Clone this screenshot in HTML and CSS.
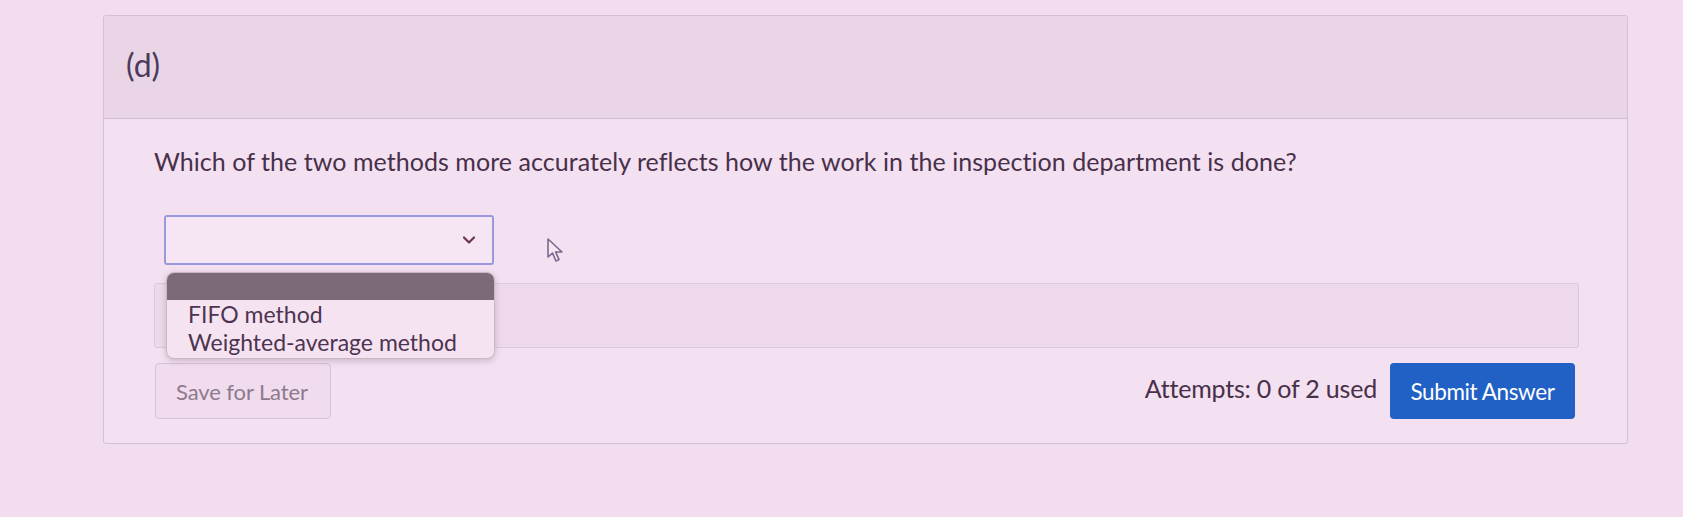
FILE: index.html
```html
<!DOCTYPE html>
<html lang="en">
<head>
<meta charset="utf-8">
<title>Question (d)</title>
<link rel="stylesheet" href="styles.css">
</head>
<body>
<div class="page">
  <section class="card">
    <header class="card-header">(d)</header>
    <div class="card-body">
      <p class="question">Which of the two methods more accurately reflects how the work in the inspection department is done?</p>
      <div class="select-wrap">
        <div class="select">
          <svg class="chev" width="14" height="10" viewBox="0 0 14 10"><path d="M2 2.5 L7 7.5 L12 2.5" fill="none" stroke="#6a3552" stroke-width="2.2" stroke-linecap="round" stroke-linejoin="round"/></svg>
        </div>
        <div class="menu">
          <div class="menu-blank"></div>
          <div class="menu-item">FIFO method</div>
          <div class="menu-item">Weighted-average method</div>
        </div>
        <svg class="cursor" width="22" height="28" viewBox="0 0 22 28"><path d="M2 2 L2 20 L6.5 16 L10 24 L13 22.6 L9.6 15 L16 15 Z" fill="#f6e6f3" stroke="#7a6890" stroke-width="1.6" stroke-linejoin="round"/></svg>
      </div>
      <div class="feedback"></div>
      <div class="actions">
        <button class="btn-save">Save for Later</button>
        <div class="submit-group">
          <span class="attempts">Attempts: 0 of 2 used</span>
          <button class="btn-submit">Submit Answer</button>
        </div>
      </div>
    </div>
  </section>
</div>
</body>
</html>
```

FILE: styles.css
```css
html, body {
  margin: 0;
  padding: 0;
}
body {
  background: #f1ddee;
  font-family: Lato, "Open Sans", "Liberation Sans", sans-serif;
  color: #47304a;
  width: 1683px;
  height: 517px;
  overflow: hidden;
}
.page {
  padding: 15px 55px 0 103px;
}
.card {
  border: 1px solid #d5c0d2;
  border-radius: 3px;
  background: #f3e0f0;
}
.card-header {
  box-sizing: border-box;
  height: 103px;
  background: #e9d5e5;
  border-bottom: 1px solid #d3bdd0;
  padding-left: 22px;
  padding-bottom: 6px;
  display: flex;
  align-items: center;
  font-size: 32px;
  color: #4b3a5c;
}
.card-body {
  padding: 27px 48px 24px 50px;
}
.question {
  margin: 0;
  font-size: 25px;
  line-height: 30px;
  color: #47304a;
  letter-spacing: 0.05px;
}
.select-wrap {
  position: relative;
  margin-top: 39px;
  margin-left: 10px;
  width: 330px;
}
.select {
  height: 50px;
  box-sizing: border-box;
  border: 2px solid #9a98dc;
  border-radius: 3px;
  background: #f6e5f3;
  display: flex;
  align-items: center;
  justify-content: flex-end;
  padding-right: 16px;
}
.menu {
  position: absolute;
  top: 57px;
  left: 2px;
  width: 327px;
  background: #f5e3f2;
  border: 1px solid #c9b6c6;
  border-radius: 8px;
  overflow: hidden;
  box-shadow: 0 2px 6px rgba(90, 60, 90, 0.25);
  z-index: 2;
}
.menu-blank {
  height: 27px;
  background: #7c6a79;
}
.menu-item {
  font-size: 23px;
  line-height: 28px;
  padding-left: 21px;
  color: #4d3451;
}
.menu-item:last-child {
  padding-bottom: 2px;
}
.cursor {
  position: absolute;
  left: 382px;
  top: 22px;
}
.feedback {
  margin-top: 18px;
  margin-left: 0;
  height: 65px;
  background: #eed9ea;
  border: 1px solid #dcc8d9;
  border-radius: 3px;
  box-sizing: border-box;
}
.actions {
  margin-top: 15px;
  display: flex;
  justify-content: space-between;
  align-items: center;
}
.btn-save {
  height: 56px;
  width: 176px;
  margin-left: 1px;
  font-family: inherit;
  font-size: 22px;
  color: #8e7a8c;
  background: #f0dcec;
  border: 1px solid #d7c3d4;
  border-radius: 4px;
  text-align: left;
  padding-left: 20px;
  letter-spacing: -0.1px;
}
.submit-group {
  display: flex;
  align-items: center;
  gap: 13px;
  margin-right: 4px;
}
.attempts {
  font-size: 25px;
  color: #47304a;
  margin-bottom: 6px;
  letter-spacing: -0.2px;
}
.btn-submit {
  height: 56px;
  width: 185px;
  font-family: inherit;
  font-size: 22.5px;
  color: #ffffff;
  background: #2160c4;
  border: none;
  border-radius: 4px;
  letter-spacing: -0.4px;
}
```
